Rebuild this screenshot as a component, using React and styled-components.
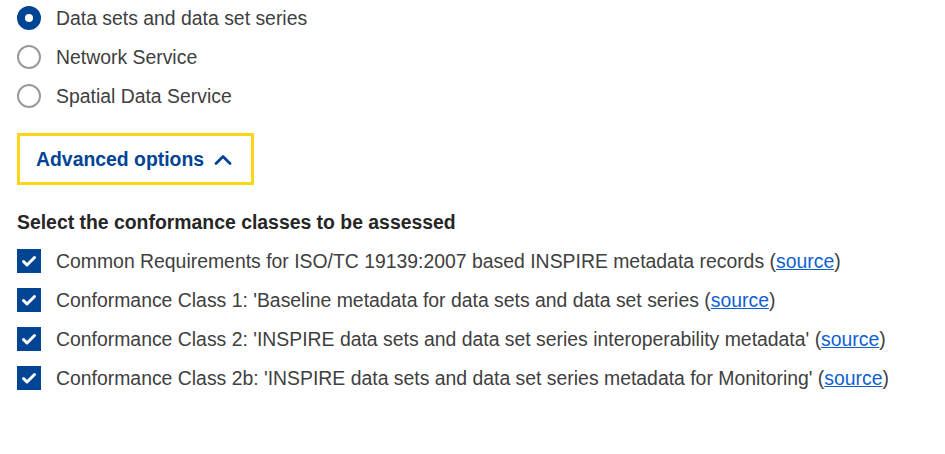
import React from 'react'
import styled, { createGlobalStyle } from 'styled-components'

const GlobalStyle = createGlobalStyle`
    body {
        margin: 0;
        background: #ffffff;
        font-family: "Liberation Sans", Arial, sans-serif;
        color: #404040;
    }
`
const Page = styled.div`
    padding: 6px 17px 0 17px;
    display: flex;
    flex-direction: column;
    align-items: flex-start;
`
const List = styled.div`
    display: flex;
    flex-direction: column;
    gap: 15px;
`
const Option = styled.label`
    display: flex;
    align-items: center;
    height: 24px;
    font-size: 19.4px;
    line-height: 24px;
    white-space: nowrap;
    cursor: pointer;
`
const Radio = styled.span`
    box-sizing: border-box;
    width: 24px;
    height: 24px;
    border-radius: 50%;
    margin-right: 15px;
    display: flex;
    align-items: center;
    justify-content: center;
    border: 2px solid ${p => (p.checked ? '#004494' : '#9a9a9a')};
    background: ${p => (p.checked ? '#004494' : '#ffffff')};
    &::after {
        content: '';
        width: 8px;
        height: 8px;
        border-radius: 50%;
        background: #ffffff;
        display: ${p => (p.checked ? 'block' : 'none')};
    }
`
const Toggle = styled.button`
    margin-top: 25px;
    box-sizing: border-box;
    height: 52px;
    padding: 0 19px 0 16px;
    border: 3px solid #ffd617;
    background: #ffffff;
    display: flex;
    align-items: center;
    gap: 10px;
    font-family: "Liberation Sans", Arial, sans-serif;
    font-size: 19.4px;
    font-weight: bold;
    color: #004494;
    cursor: pointer;
`
const Heading = styled.div`
    margin-top: 25px;
    margin-bottom: 15px;
    font-size: 19.4px;
    line-height: 24px;
    font-weight: bold;
    color: #262626;
`
const Box = styled.span`
    box-sizing: border-box;
    width: 24px;
    height: 24px;
    margin-right: 15px;
    background: #004494;
    display: flex;
    align-items: center;
    justify-content: center;
    flex-shrink: 0;
`
const Source = styled.a`
    color: #0e5fd1;
    text-decoration: underline;
`

const types = [
    { label: 'Data sets and data set series', checked: true },
    { label: 'Network Service', checked: false },
    { label: 'Spatial Data Service', checked: false },
]

const classes = [
    'Common Requirements for ISO/TC 19139:2007 based INSPIRE metadata records',
    "Conformance Class 1: 'Baseline metadata for data sets and data set series",
    "Conformance Class 2: 'INSPIRE data sets and data set series interoperability metadata'",
    "Conformance Class 2b: 'INSPIRE data sets and data set series metadata for Monitoring'",
]

const Check = () => (
    <svg width="16" height="16" viewBox="0 0 16 16">
        <path d="M2.5 8.5 L6 12 L13.5 4.5" fill="none" stroke="#ffffff" strokeWidth="3" strokeLinecap="round" strokeLinejoin="round" />
    </svg>
)

const ChevronUp = () => (
    <svg width="18" height="18" viewBox="0 0 18 18">
        <path d="M2 13.5 L9 6.5 L16 13.5" fill="none" stroke="#004494" strokeWidth="2.8" strokeLinecap="round" strokeLinejoin="round" />
    </svg>
)

const App = () => {
    return (
        <Page>
            <GlobalStyle />
            <List>
                {types.map(t => (
                    <Option key={t.label}>
                        <Radio checked={t.checked} />
                        {t.label}
                    </Option>
                ))}
            </List>

            <Toggle>Advanced options <ChevronUp /></Toggle>

            <Heading>Select the conformance classes to be assessed</Heading>
            <List>
                {classes.map(c => (
                    <Option key={c}>
                        <Box><Check /></Box>
                        <span>{c} (<Source href="#">source</Source>)</span>
                    </Option>
                ))}
            </List>
        </Page>
    )
}

export default App
